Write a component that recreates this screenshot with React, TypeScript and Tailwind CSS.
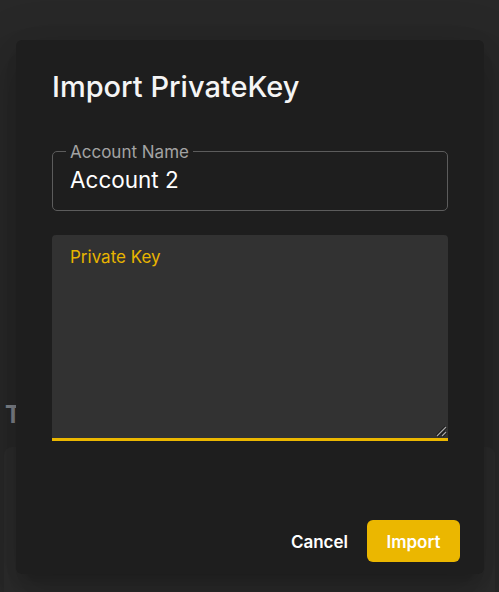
import React from "react";

export default function App() {
  return (
    <div
      className="relative w-full h-[592px] overflow-hidden bg-[#282828]"
      style={{ fontFamily: "Inter, 'Noto Sans', sans-serif" }}
    >
      {/* background page content (dimmed) */}
      <div className="flex flex-col pt-[403px] px-[4px] gap-[20px]">
        <div className="pl-[1px] text-[24px] font-bold leading-[24px] text-[#80848b]">T</div>
        <div className="h-[200px] rounded-[8px] bg-[#2c2c2c]" />
      </div>

      {/* modal */}
      <div className="absolute left-[16px] top-[40px] w-[468px] h-[534px] rounded-[6px] bg-[#1e1e1e] shadow-[0_11px_15px_-7px_rgba(0,0,0,0.2),0_24px_38px_3px_rgba(0,0,0,0.14),0_9px_46px_8px_rgba(0,0,0,0.12)] flex flex-col">
        <div className="px-[36px] pt-[29px]">
          <h2 className="text-[29px] leading-[36px] font-medium text-[#f5f5f5]">Import PrivateKey</h2>

          <div className="relative mt-[46px] h-[60px] rounded-[5px] border border-[#5c5c5c] pl-[17px] pt-[14px]">
            <span className="absolute left-[13px] top-[-8px] px-[4px] bg-[#1e1e1e] text-[17px] leading-[16px] text-[#a3a3a3]">
              Account Name
            </span>
            <div className="text-[22.5px] leading-[28px] text-white">Account 2</div>
          </div>

          <div className="relative mt-[24px] h-[206px] rounded-t-[4px] bg-[#323232] border-b-[3px] border-[#ebb700] px-[18px] pt-[11px]">
            <div className="text-[17px] leading-[22px] text-[#e8b500]">Private Key</div>
            <svg
              className="absolute right-[1px] bottom-[1px]"
              width="12"
              height="12"
              viewBox="0 0 12 12"
            >
              <path d="M11 2 L2 11" stroke="#111" strokeWidth="3" />
              <path d="M11 7 L7 11" stroke="#111" strokeWidth="3" />
              <path d="M11 2 L2 11" stroke="#a8a8a8" strokeWidth="1.2" />
              <path d="M11 7 L7 11" stroke="#a8a8a8" strokeWidth="1.2" />
            </svg>
          </div>
        </div>

        <div className="mt-auto flex items-center justify-end gap-[19px] pr-[24px] pb-[12px]">
          <button className="pt-[4px] text-[17px] font-semibold text-white">Cancel</button>
          <button className="w-[93px] h-[42px] pt-[4px] rounded-[6px] bg-[#ebb700] text-[17px] font-semibold text-white">
            Import
          </button>
        </div>
      </div>
    </div>
  );
}
